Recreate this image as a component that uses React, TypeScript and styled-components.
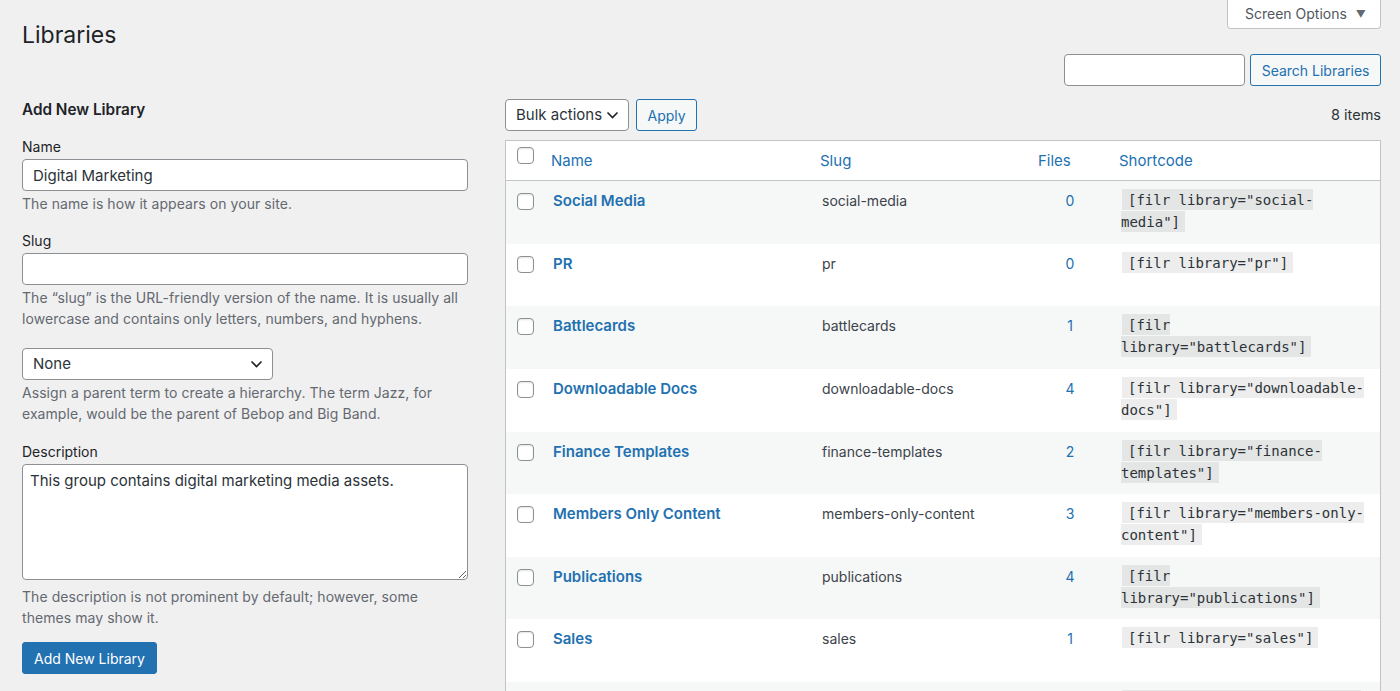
import React from 'react';
import styled, { createGlobalStyle } from 'styled-components';

const GlobalStyle = createGlobalStyle`
  * { box-sizing: border-box; }
  html, body {
    margin: 0;
    padding: 0;
    overflow: hidden;
    background: #f0f0f1;
  }
  body {
    font-family: Inter, "Noto Sans", sans-serif;
    font-size: 14px;
    line-height: 1.5;
    color: #1d2327;
  }
`;

interface Library {
  name: string;
  slug: string;
  files: number;
}

const libraries: Library[] = [
  { name: 'Social Media', slug: 'social-media', files: 0 },
  { name: 'PR', slug: 'pr', files: 0 },
  { name: 'Battlecards', slug: 'battlecards', files: 1 },
  { name: 'Downloadable Docs', slug: 'downloadable-docs', files: 4 },
  { name: 'Finance Templates', slug: 'finance-templates', files: 2 },
  { name: 'Members Only Content', slug: 'members-only-content', files: 3 },
  { name: 'Publications', slug: 'publications', files: 4 },
  { name: 'Sales', slug: 'sales', files: 1 },
  { name: 'Newsletter', slug: 'newsletter', files: 2 },
];

// Layout
const Page = styled.div`
  padding: 0 19px 0 22px;
`;

const TopRow = styled.div`
  display: flex;
  justify-content: space-between;
  align-items: flex-start;
  height: 54px;
`;

const Title = styled.h1`
  margin: 0;
  padding-top: 19px;
  font-size: 23px;
  font-weight: 400;
  line-height: 32px;
  color: #1d2327;
`;

const ScreenOptions = styled.button`
  display: flex;
  align-items: center;
  gap: 9px;
  height: 30px;
  width: 154px;
  margin-top: -1px;
  padding: 0 14px 0 17px;
  background: #fff;
  border: 1px solid #c3c4c7;
  border-top: none;
  border-radius: 0 0 4px 4px;
  font-family: inherit;
  font-size: 14px;
  color: #50575e;
`;

const Caret = styled.span`
  font-size: 10px;
  color: #646970;
`;

const SearchRow = styled.div`
  display: flex;
  justify-content: flex-end;
  gap: 5px;
  height: 32px;
`;

const Columns = styled.div`
  display: flex;
  gap: 37px;
  margin-top: 13px;
`;

const LeftCol = styled.div`
  width: 446px;
  flex: none;
  padding-top: 1px;
`;

const RightCol = styled.div`
  flex: 1;
  min-width: 0;
`;

// Form
const FormTitle = styled.h2`
  margin: 0;
  font-size: 15.3px;
  font-weight: 600;
  line-height: 20px;
`;

const Field = styled.div<{ $gap?: number }>`
  margin-top: ${({ $gap }) => $gap ?? 17}px;
`;

const Label = styled.label`
  display: block;
  font-size: 14px;
  line-height: 20px;
  margin-bottom: 2px;
`;

const TextInput = styled.input<{ $width?: number }>`
  display: block;
  width: ${({ $width }) => ($width ? `${$width}px` : '100%')};
  height: 32px;
  padding: 0 10px;
  border: 1px solid #8c8f94;
  border-radius: 4px;
  background: #fff;
  font-family: inherit;
  font-size: 15px;
  color: #2c3338;
  outline: none;
`;

const TextArea = styled.textarea`
  display: block;
  width: 100%;
  height: 116px;
  padding: 5px 7px;
  border: 1px solid #8c8f94;
  border-radius: 4px;
  background: #fff;
  font-family: inherit;
  font-size: 15px;
  line-height: 1.45;
  color: #2c3338;
  resize: vertical;
  outline: none;
`;

const Help = styled.p<{ $gap?: number }>`
  margin: ${({ $gap }) => $gap ?? 2}px 0 0;
  font-size: 14px;
  line-height: 21px;
  letter-spacing: 0.06px;
  color: #646970;
`;

const SelectBox = styled.div<{ $width: number }>`
  display: flex;
  align-items: center;
  justify-content: space-between;
  width: ${({ $width }) => $width}px;
  height: 32px;
  padding: 0 9px 0 10px;
  border: 1px solid #8c8f94;
  border-radius: 4px;
  background: #fff;
  font-size: 15px;
  color: #2c3338;
`;

const PrimaryButton = styled.button`
  height: 32px;
  padding: 0 11px;
  background: #2271b1;
  border: 1px solid #2271b1;
  border-radius: 3px;
  color: #fff;
  font-family: inherit;
  font-size: 14px;
`;

const SecondaryButton = styled.button`
  height: 32px;
  padding: 0 10.5px;
  background: #f6f7f7;
  border: 1px solid #2271b1;
  border-radius: 3px;
  color: #2271b1;
  font-family: inherit;
  font-size: 14px;
`;

// Table area
const Toolbar = styled.div`
  display: flex;
  align-items: center;
  gap: 7px;
  height: 32px;
  margin-bottom: 9px;
`;

const ItemCount = styled.span`
  margin-left: auto;
  font-size: 14.5px;
  color: #2c3338;
`;

const Table = styled.div`
  border: 1px solid #c3c4c7;
  border-bottom: none;
  background: #fff;
  box-shadow: 0 1px 1px rgba(0, 0, 0, 0.04);
`;

const HeadRow = styled.div`
  display: grid;
  grid-template-columns: 35px 269px 218px 81px 1fr;
  height: 40px;
  border-bottom: 1px solid #c3c4c7;
`;

const Row = styled.div<{ $striped: boolean }>`
  display: grid;
  grid-template-columns: 35px 269px 218px 81px 1fr;
  height: 62.625px;
  background: ${({ $striped }) => ($striped ? '#f6f7f7' : '#fff')};
`;

const CheckCell = styled.div<{ $top: number }>`
  padding: ${({ $top }) => $top}px 0 0 11px;
`;

const Checkbox = styled.span`
  display: block;
  width: 17px;
  height: 17px;
  border: 1px solid #8c8f94;
  border-radius: 4px;
  background: #fff;
  box-shadow: inset 0 1px 2px rgba(0, 0, 0, 0.1);
`;

const HeadCell = styled.div`
  padding: 10px 10px;
  font-size: 15px;
  line-height: 20px;
  color: #2271b1;
`;

const Cell = styled.div<{ $center?: boolean }>`
  padding: 10px 10px 0;
  font-size: 14px;
  line-height: 20px;
  color: #3c434a;
  text-align: ${({ $center }) => ($center ? 'center' : 'left')};
`;

const NameLink = styled.a`
  padding-left: 2px;
  font-size: 15px;
  font-weight: 600;
  color: #2271b1;
  text-decoration: none;
`;

const SlugText = styled.span`
  padding-left: 2px;
`;

const FilesLink = styled.a`
  padding-left: 3px;
  color: #2271b1;
  text-decoration: none;
`;

const CodeCell = styled.div`
  padding: 8px 0 0 12px;
  width: 258px;
`;

const Code = styled.code`
  margin: 0 1px;
  padding: 3px 5px 2px 6px;
  background: rgba(0, 0, 0, 0.07);
  font-family: "DejaVu Sans Mono", "Liberation Mono", monospace;
  font-size: 14px;
  line-height: 21px;
  color: #2c3338;
`;

const Chevron = () => (
  <svg width="13" height="8" viewBox="0 0 13 8" fill="none">
    <path d="M1.5 1.5 L6.5 6.5 L11.5 1.5" stroke="#1d2327" strokeWidth="1.6" />
  </svg>
);

const App = () => {
  return (
    <>
      <GlobalStyle />
      <Page>
        <TopRow>
          <Title>Libraries</Title>
          <ScreenOptions>
            Screen Options <Caret>▼</Caret>
          </ScreenOptions>
        </TopRow>
        <SearchRow>
          <TextInput $width={181} />
          <SecondaryButton>Search Libraries</SecondaryButton>
        </SearchRow>

        <Columns>
          <LeftCol>
            <FormTitle>Add New Library</FormTitle>
            <Field>
              <Label>Name</Label>
              <TextInput defaultValue="Digital Marketing" />
              <Help>The name is how it appears on your site.</Help>
            </Field>
            <Field>
              <Label>Slug</Label>
              <TextInput />
              <Help>
                The “slug” is the URL-friendly version of the name. It is usually all
                lowercase and contains only letters, numbers, and hyphens.
              </Help>
            </Field>
            <Field $gap={19}>
              <SelectBox $width={251}>
                None <Chevron />
              </SelectBox>
              <Help>
                Assign a parent term to create a hierarchy. The term Jazz, for
                example, would be the parent of Bebop and Big Band.
              </Help>
            </Field>
            <Field $gap={18}>
              <Label>Description</Label>
              <TextArea defaultValue="This group contains digital marketing media assets." />
              <Help $gap={6}>
                The description is not prominent by default; however, some
                themes may show it.
              </Help>
            </Field>
            <Field $gap={14}>
              <PrimaryButton>Add New Library</PrimaryButton>
            </Field>
          </LeftCol>

          <RightCol>
            <Toolbar>
              <SelectBox $width={124}>
                Bulk actions <Chevron />
              </SelectBox>
              <SecondaryButton>Apply</SecondaryButton>
              <ItemCount>8 items</ItemCount>
            </Toolbar>
            <Table>
              <HeadRow>
                <CheckCell $top={6}>
                  <Checkbox />
                </CheckCell>
                <HeadCell>Name</HeadCell>
                <HeadCell>Slug</HeadCell>
                <HeadCell>Files</HeadCell>
                <HeadCell>Shortcode</HeadCell>
              </HeadRow>
              {libraries.map((lib, i) => (
                <Row key={lib.slug} $striped={i % 2 === 0}>
                  <CheckCell $top={12}>
                    <Checkbox />
                  </CheckCell>
                  <Cell>
                    <NameLink href="#">{lib.name}</NameLink>
                  </Cell>
                  <Cell>
                    <SlugText>{lib.slug}</SlugText>
                  </Cell>
                  <Cell $center>
                    <FilesLink href="#">{lib.files}</FilesLink>
                  </Cell>
                  <CodeCell>
                    <Code>[filr library="{lib.slug}"]</Code>
                  </CodeCell>
                </Row>
              ))}
            </Table>
          </RightCol>
        </Columns>
      </Page>
    </>
  );
};

export default App;
